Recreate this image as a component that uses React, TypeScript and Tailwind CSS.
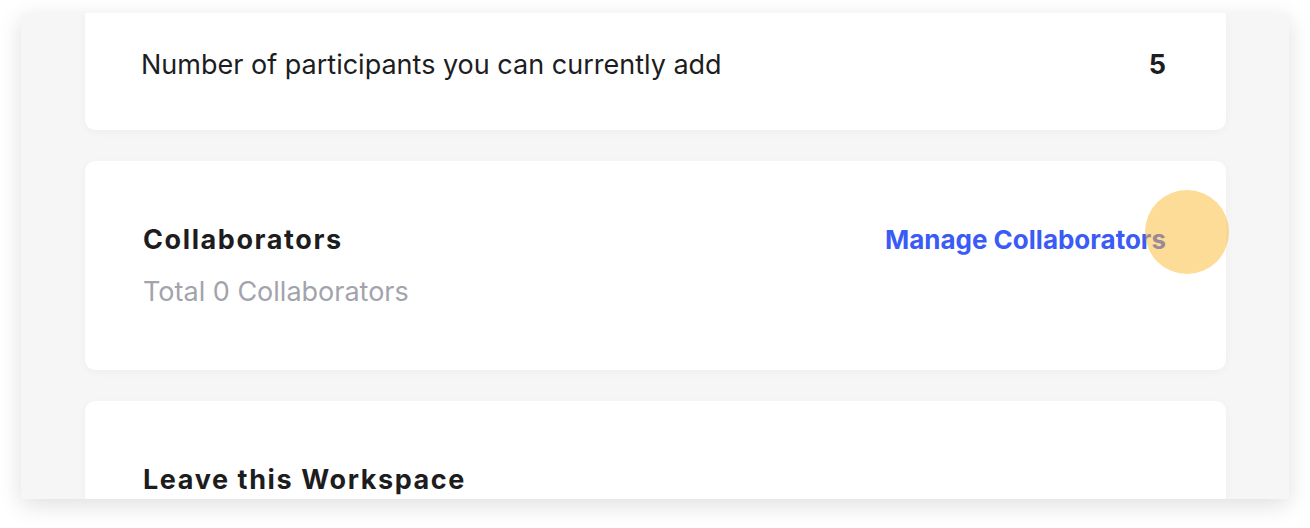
import React from "react";

export default function App() {
  return (
    <div className="w-[1310px] h-[528px] bg-white overflow-hidden pt-[13px] px-[21px]" style={{ fontFamily: '"Inter", "Noto Sans", sans-serif' }}>
      <div className="h-[486px] bg-[#f6f6f6] overflow-hidden shadow-[0_6px_22px_rgba(0,0,0,0.13)] pl-[64px] pr-[63px] flex flex-col gap-[31px]">
        <div className="h-[117px] shrink-0 bg-white rounded-b-[10px] shadow-[0_2px_8px_rgba(0,0,0,0.04)] pl-[56px] pr-[60px] pt-[36px] flex items-start justify-between">
          <span className="text-[27px] leading-[32px] text-[#1d1d1f]">Number of participants you can currently add</span>
          <span className="text-[27px] leading-[32px] font-bold text-[#1d1d1f]">5</span>
        </div>
        <div className="h-[209px] shrink-0 bg-white rounded-[10px] shadow-[0_2px_8px_rgba(0,0,0,0.04)] pl-[58px] pr-[60px] pt-[63px] flex flex-col">
          <div className="flex items-center justify-between">
            <span className="text-[27px] leading-[32px] font-bold tracking-[1.6px] text-[#1d1d1f]">Collaborators</span>
            <span className="relative text-[26px] leading-[32px] font-bold text-[#3b5bf6]">
              Manage Collaborators
              <span className="absolute right-[-63px] top-[-34px] w-[84px] h-[84px] rounded-full bg-[#fbb931]/50" />
            </span>
          </div>
          <span className="mt-[21px] text-[27px] leading-[30px] text-[#a3a3ad]">Total 0 Collaborators</span>
        </div>
        <div className="h-[200px] shrink-0 bg-white rounded-[10px] shadow-[0_2px_8px_rgba(0,0,0,0.04)] pl-[58px] pt-[63px]">
          <span className="text-[27px] leading-[32px] font-bold tracking-[1.6px] text-[#1d1d1f]">Leave this Workspace</span>
        </div>
      </div>
    </div>
  );
}
